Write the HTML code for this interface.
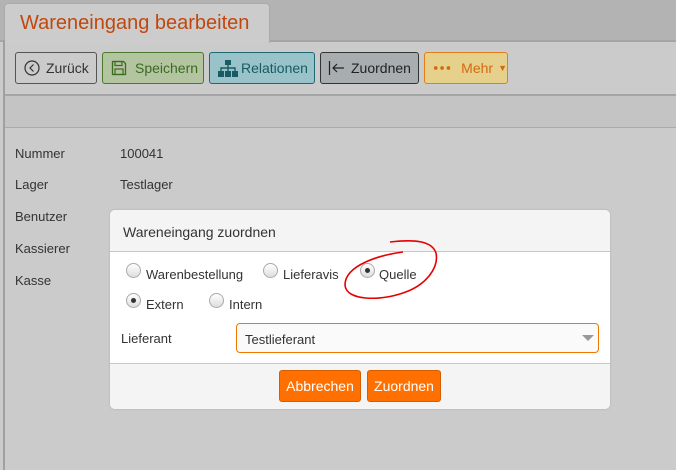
<!DOCTYPE html>
<html><head><meta charset="utf-8"><style>
*{box-sizing:border-box;margin:0;padding:0}
body{width:676px;height:470px;overflow:hidden;background:#cbcbcb;font-family:"Liberation Sans",sans-serif;font-size:13px;color:#333;position:relative}
.abs{position:absolute}
.btn{position:absolute;top:52px;height:32px;border:1px solid #555;border-radius:3px;font-size:14px;display:flex;align-items:center;padding-left:8px;white-space:nowrap}
.lbl{position:absolute;left:15px;font-size:13px;color:#333}
.radio{position:absolute;width:15px;height:15px;border-radius:50%;border:1px solid #aaa;background:linear-gradient(#fff,#ddd)}
.radio.on::after{content:"";position:absolute;left:4px;top:4px;width:5px;height:5px;border-radius:50%;background:#333}
.rt{position:absolute;font-size:13px;color:#333}
</style></head><body>
<div class="abs" style="left:0;top:0;width:676px;height:41px;background:#b3b3b3"></div>
<div class="abs" style="left:4px;top:3px;width:266px;height:40px;background:#cccccc;border:1px solid #aaa;border-bottom:none;border-radius:4px 4px 0 0"></div>
<div class="abs" style="left:20px;top:12px;font-size:20px;color:#c0480e">Wareneingang bearbeiten</div>
<div class="abs" style="left:270px;top:40px;width:406px;height:2px;background:#a5a5a5"></div>
<div class="abs" style="left:0;top:40px;width:4px;height:2px;background:#a5a5a5"></div>
<div class="abs" style="left:3px;top:40px;width:2px;height:430px;background:#a0a0a0"></div>
<div class="abs" style="left:5px;top:94px;width:671px;height:2px;background:#a5a5a5"></div>
<div class="abs" style="left:5px;top:96px;width:671px;height:31px;background:#c4c4c4"></div>
<div class="abs" style="left:5px;top:127px;width:671px;height:1px;background:#aaa"></div>

<div class="btn" style="left:15px;width:82px;background:#cbcbcb;color:#333"><svg width="16" height="16" viewBox="0 0 16 16" style="margin-right:6px"><circle cx="8" cy="8" r="7" fill="none" stroke="#333" stroke-width="1.2"/><path d="M9.5 4.5L6 8l3.5 3.5" fill="none" stroke="#333" stroke-width="1.2"/></svg>Zurück</div>
<div class="btn" style="left:102px;width:102px;background:#b3c4a0;border-color:#4a7a2a;color:#3c6a20"><svg width="16" height="16" viewBox="0 0 16 16" style="margin-right:8px"><path d="M1.5 1.5h11l2 2v11h-13z" fill="none" stroke="#3c6a20" stroke-width="1.3"/><rect x="4" y="1.5" width="7" height="4" fill="none" stroke="#3c6a20" stroke-width="1.2"/><rect x="4" y="9" width="8" height="5.5" fill="none" stroke="#3c6a20" stroke-width="1.2"/></svg>Speichern</div>
<div class="btn" style="left:209px;width:106px;background:#99c3c8;border-color:#1e6a72;color:#175c64"><svg width="20" height="17" viewBox="0 0 20 17" style="margin-right:3px"><rect x="7" y="0" width="6" height="5" fill="#175c64"/><rect x="0" y="11" width="6" height="6" fill="#175c64"/><rect x="7" y="11" width="6" height="6" fill="#175c64"/><rect x="14" y="11" width="6" height="6" fill="#175c64"/><path d="M10 5v6M3 11V8h14v3" fill="none" stroke="#175c64" stroke-width="1.4"/></svg>Relationen</div>
<div class="btn" style="left:320px;width:99px;background:#a8adb0;border-color:#333;color:#222;padding-left:7px"><svg width="18" height="16" viewBox="0 0 18 16" style="margin-right:5px"><path d="M1.5 1v14M16 8H5M9 4L5 8l4 4" fill="none" stroke="#222" stroke-width="1.2"/></svg>Zuordnen</div>
<div class="btn" style="left:424px;width:84px;background:#e5d08c;border-color:#e37e1b;color:#d46a10"><svg width="20" height="6" viewBox="0 0 20 6" style="margin-right:10px"><circle cx="3" cy="3" r="2" fill="#d46a10"/><circle cx="10" cy="3" r="2" fill="#d46a10"/><circle cx="17" cy="3" r="2" fill="#d46a10"/></svg>Mehr<span style="font-size:9px;margin-left:5px">▼</span></div>

<div class="lbl" style="top:146px">Nummer</div><div class="abs" style="left:120px;top:146px">100041</div>
<div class="lbl" style="top:177px">Lager</div><div class="abs" style="left:120px;top:177px">Testlager</div>
<div class="lbl" style="top:209px">Benutzer</div>
<div class="lbl" style="top:241px">Kassierer</div>
<div class="lbl" style="top:273px">Kasse</div>

<div class="abs" style="left:110px;top:210px;width:500px;height:199px;background:#fff;border-radius:5px;overflow:hidden;box-shadow:0 0 2px rgba(0,0,0,.15)">
 <div class="abs" style="left:0;top:0;width:500px;height:42px;background:#f4f4f4;border-bottom:1px solid #c8c8c8"></div>
 <div class="abs" style="left:13px;top:14px;font-size:14px;color:#333">Wareneingang zuordnen</div>
 <div class="radio" style="left:16px;top:53px"></div><div class="rt" style="left:36px;top:57px">Warenbestellung</div>
 <div class="radio" style="left:153px;top:53px"></div><div class="rt" style="left:173px;top:57px">Lieferavis</div>
 <div class="radio on" style="left:250px;top:53px"></div><div class="rt" style="left:269px;top:57px">Quelle</div>
 <div class="radio on" style="left:16px;top:83px"></div><div class="rt" style="left:36px;top:87px">Extern</div>
 <div class="radio" style="left:99px;top:83px"></div><div class="rt" style="left:119px;top:87px">Intern</div>
 <div class="rt" style="left:11px;top:121px">Lieferant</div>
 <div class="abs" style="left:126px;top:113px;width:363px;height:30px;border:1px solid #f07800;border-radius:4px;background:#fafafa"></div>
 <div class="rt" style="left:135px;top:122px">Testlieferant</div>
 <div class="abs" style="left:472px;top:125px;width:0;height:0;border-left:6px solid transparent;border-right:6px solid transparent;border-top:6px solid #999"></div>
 <div class="abs" style="left:0;top:153px;width:500px;height:46px;background:#f4f4f4;border-top:1px solid #c8c8c8"></div>
 <div class="abs" style="left:169px;top:160px;width:82px;height:32px;background:#ff7000;border:1px solid #d45e00;border-radius:3px;color:#fff;font-size:14px;text-align:center;line-height:30px">Abbrechen</div>
 <div class="abs" style="left:257px;top:160px;width:74px;height:32px;background:#ff7000;border:1px solid #d45e00;border-radius:3px;color:#fff;font-size:14px;text-align:center;line-height:30px">Zuordnen</div>
</div>
<svg class="abs" style="left:335px;top:235px" width="110" height="70" viewBox="0 0 110 70"><path d="M68 17C45 20 10 30 10 50C11 66 45 66 68 58C92 50 104 32 101 18C97 6 80 4 55 7" fill="none" stroke="#e60000" stroke-width="1.6"/></svg>
</body></html>
